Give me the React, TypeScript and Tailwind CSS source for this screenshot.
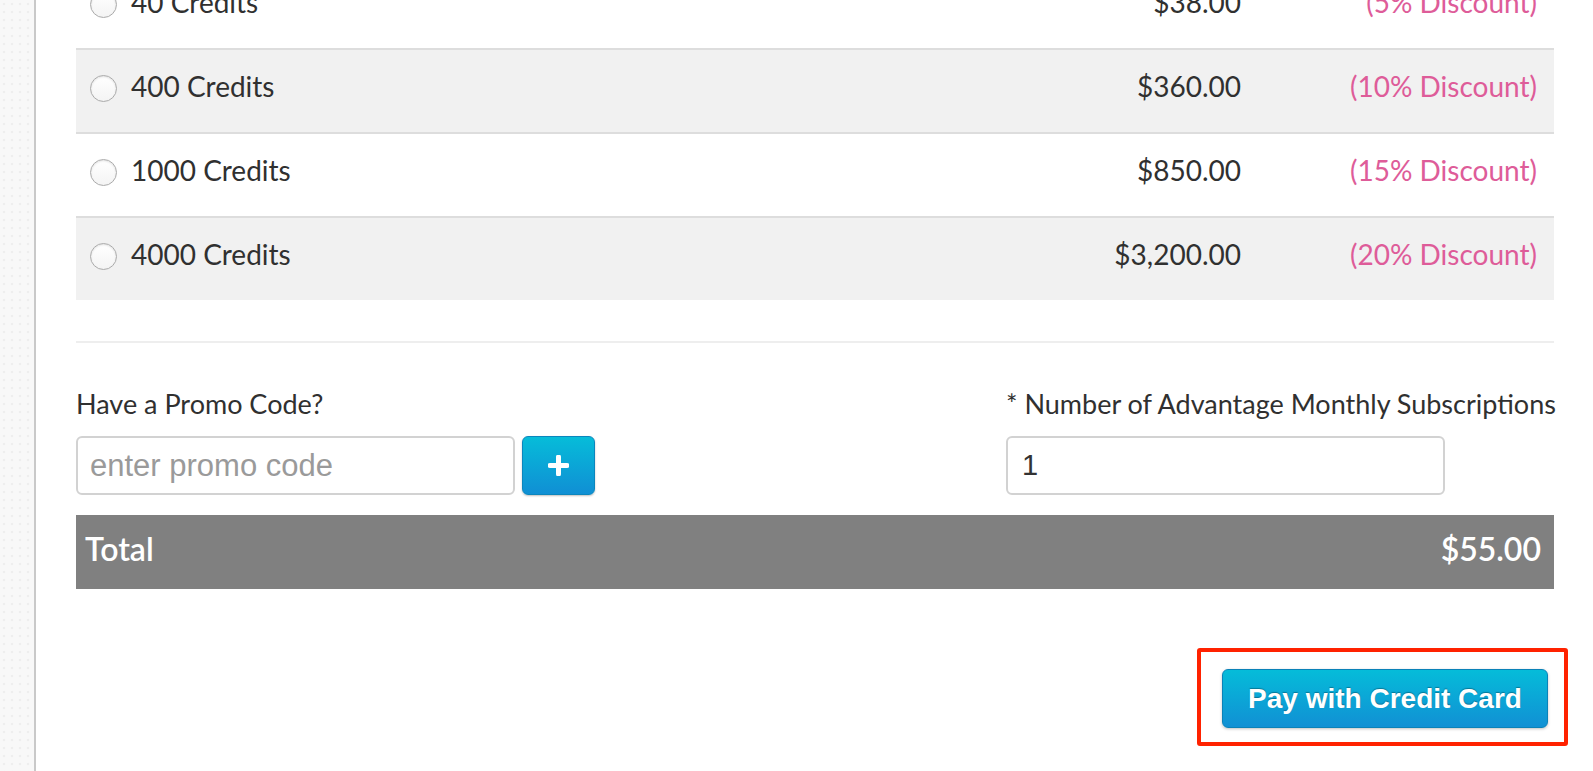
const packages = [
  { name: "40 Credits", price: "$38.00", discount: "(5% Discount)" },
  { name: "400 Credits", price: "$360.00", discount: "(10% Discount)" },
  { name: "1000 Credits", price: "$850.00", discount: "(15% Discount)" },
  { name: "4000 Credits", price: "$3,200.00", discount: "(20% Discount)" },
];

function Radio() {
  return (
    <span className="w-[27px] h-[27px] shrink-0 rounded-full border border-[#ababab] bg-[linear-gradient(#ffffff,#f4f4f4)] shadow-[inset_0_1px_2px_rgba(0,0,0,0.12)]" />
  );
}

function PackageRow({ pkg, index }: { pkg: (typeof packages)[number]; index: number }) {
  return (
    <div
      className={
        index === 0
          ? "h-[82px] flex items-center pl-[14px] pr-[17px] bg-white"
          : index % 2 === 1
          ? "h-[84px] border-t-2 border-[#dddddd] flex items-center pl-[14px] pr-[17px] bg-[#f1f1f1]"
          : "h-[84px] border-t-2 border-[#dddddd] flex items-center pl-[14px] pr-[17px] bg-white"
      }
    >
      <div className="flex-1 flex items-center gap-[14px] -mt-[6px]">
        <Radio />
        <span className="text-[28px] text-[#303030] -mt-[4px]">{pkg.name}</span>
      </div>
      <span className="text-[28px] text-[#303030] -mt-[10px]">{pkg.price}</span>
      <span className="w-[296px] text-right text-[28px] text-[#de5c99] -mt-[10px]">{pkg.discount}</span>
    </div>
  );
}

export default function App() {
  return (
    <div className="h-[771px] w-full flex overflow-hidden bg-white font-['Lato','Open_Sans',sans-serif]">
      <div className="w-[36px] shrink-0 border-r-2 border-[#c9c9c9] bg-[#f8f8f8] bg-[radial-gradient(circle,#eeeeee_1.2px,transparent_1.6px)] bg-[length:8px_8px]" />
      <div className="flex-1 pl-[40px] pr-[39px]">
        <div className="-mt-[34px]">
          {packages.map((p, i) => (
            <PackageRow key={p.name} pkg={p} index={i} />
          ))}
        </div>

        <div className="mt-[41px] h-[2px] bg-[#eeeeee]" />

        <div className="mt-[46px] flex justify-between">
          <div>
            <label className="block h-[30px] leading-[30px] text-[27px] text-[#303030]">Have a Promo Code?</label>
            <div className="mt-[17px] flex gap-[7px]">
              <input
                placeholder="enter promo code"
                className="w-[439px] h-[59px] rounded-[6px] border-2 border-[#d2d2d2] px-[12px] text-[31px] text-[#555] placeholder:text-[#9a9a9a] font-['Liberation_Sans',Arial,sans-serif] outline-none"
              />
              <button className="w-[73px] h-[59px] rounded-[6px] border border-[#0b86bd] bg-[linear-gradient(#06bcd9,#108fd4)] shadow-[0_1px_2px_rgba(0,0,0,0.25)] flex items-center justify-center">
                <svg width="21" height="21" viewBox="0 0 21 21">
                  <path d="M10.5 2v17M2 10.5h17" stroke="#ffffff" strokeWidth="5" strokeLinecap="round" />
                </svg>
              </button>
            </div>
          </div>
          <div className="w-[548px]">
            <label className="block h-[30px] leading-[30px] text-[27px] text-[#303030] whitespace-nowrap">
              * Number of Advantage Monthly Subscriptions
            </label>
            <input
              defaultValue="1"
              className="mt-[17px] w-[439px] h-[59px] rounded-[6px] border-2 border-[#d2d2d2] px-[14px] text-[29px] text-[#333] font-['Liberation_Sans',Arial,sans-serif] outline-none"
            />
          </div>
        </div>

        <div className="mt-[20px] h-[74px] bg-[#808080] flex items-center justify-between pl-[9px] pr-[13px] text-white text-[32px] font-semibold">
          <span className="-mt-[7px]">Total</span>
          <span className="-mt-[7px]">$55.00</span>
        </div>

        <div className="mt-[59px] flex justify-end -mr-[14px]">
          <div className="border-4 border-[#ff2200] rounded-[3px] pl-[21px] pr-[16px] pt-[17px] pb-[14px]">
            <button className="w-[326px] h-[59px] rounded-[6px] border border-[#0a82b8] bg-[linear-gradient(#05bcd9,#1190d4)] shadow-[0_1px_3px_rgba(0,0,0,0.25)] text-white text-[28px] font-bold font-['Liberation_Sans',Arial,sans-serif] [text-shadow:0_-1px_1px_rgba(0,0,0,0.3)]">
              Pay with Credit Card
            </button>
          </div>
        </div>
      </div>
    </div>
  );
}
